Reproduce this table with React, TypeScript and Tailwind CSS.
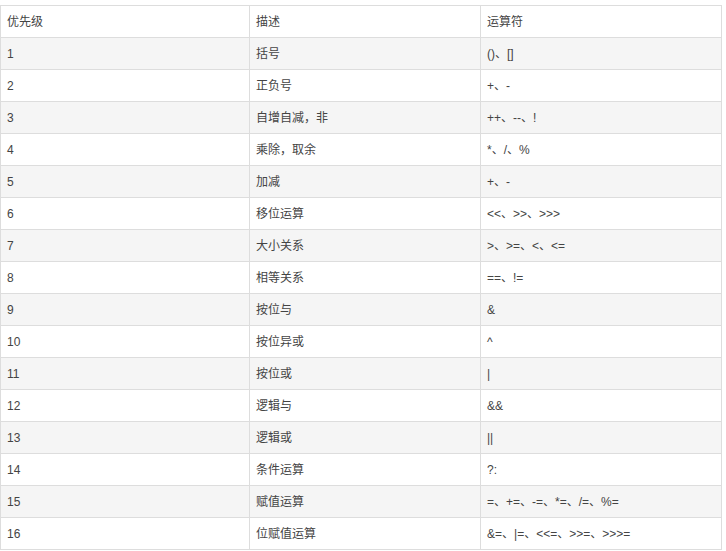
import React from "react";

const rows: [string, string, string][] = [
  ["1", "括号", "()、[]"],
  ["2", "正负号", "+、-"],
  ["3", "自增自减，非", "++、--、!"],
  ["4", "乘除，取余", "*、/、%"],
  ["5", "加减", "+、-"],
  ["6", "移位运算", "<<、>>、>>>"],
  ["7", "大小关系", ">、>=、<、<="],
  ["8", "相等关系", "==、!="],
  ["9", "按位与", "&"],
  ["10", "按位异或", "^"],
  ["11", "按位或", "|"],
  ["12", "逻辑与", "&&"],
  ["13", "逻辑或", "||"],
  ["14", "条件运算", "?:"],
  ["15", "赋值运算", "=、+=、-=、*=、/=、%="],
  ["16", "位赋值运算", "&=、|=、<<=、>>=、>>>="],
];

const cell = "border border-[#dddddd] h-[32px] px-[6px] py-0 text-left align-middle font-normal";

export default function App() {
  return (
    <div
      className="bg-white w-[726px] h-[551px] pt-[5px] text-[12px] text-[#444444]"
      style={{ fontFamily: '"Liberation Sans", "Noto Sans CJK SC", sans-serif' }}
    >
      <table className="border-collapse w-[721px] table-fixed">
        <colgroup>
          <col className="w-[249px]" />
          <col className="w-[231px]" />
          <col className="w-[241px]" />
        </colgroup>
        <thead>
          <tr className="bg-white">
            <th className={cell}>优先级</th>
            <th className={cell}>描述</th>
            <th className={cell}>运算符</th>
          </tr>
        </thead>
        <tbody>
          {rows.map((r, i) => (
            <tr key={i} className={i % 2 === 0 ? "bg-[#f5f5f5]" : "bg-white"}>
              <td className={cell}>{r[0]}</td>
              <td className={cell}>{r[1]}</td>
              <td className={cell}>{r[2]}</td>
            </tr>
          ))}
        </tbody>
      </table>
    </div>
  );
}
